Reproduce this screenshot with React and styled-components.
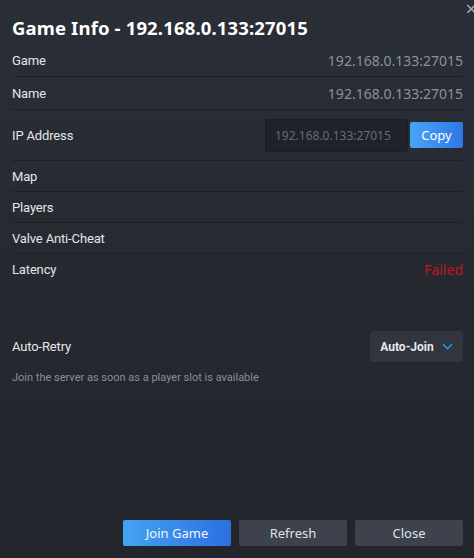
import React from 'react';
import styled, { createGlobalStyle } from 'styled-components';

const GlobalStyle = createGlobalStyle`
  html, body {
    margin: 0;
    padding: 0;
    background: #23262d;
  }
  * {
    box-sizing: border-box;
  }
`;

const rows = [
  { label: 'Game', value: '192.168.0.133:27015', tall: true },
  { label: 'Name', value: '192.168.0.133:27015', tall: true },
  { label: 'IP Address', input: '192.168.0.133:27015' },
  { label: 'Map' },
  { label: 'Players' },
  { label: 'Valve Anti-Cheat' },
  { label: 'Latency', value: 'Failed', error: true, last: true },
];

const App = () => {
  return (
    <>
      <GlobalStyle />
      <Dialog>
        <CloseGlyph>×</CloseGlyph>
        <Title>Game Info - 192.168.0.133:27015</Title>
        <InfoList>
          {rows.map(row => (
            <InfoRow
              key={row.label}
              $tall={row.tall}
              $input={!!row.input}
              $last={row.last}
            >
              <Label>{row.label}</Label>
              {row.value && <Value $error={row.error}>{row.value}</Value>}
              {row.input && (
                <InputGroup>
                  <AddressField>{row.input}</AddressField>
                  <CopyButton>Copy</CopyButton>
                </InputGroup>
              )}
            </InfoRow>
          ))}
        </InfoList>
        <RetrySection>
          <RetryRow>
            <Label>Auto-Retry</Label>
            <Dropdown>
              Auto-Join
              <svg width="11" height="7" viewBox="0 0 12 8" fill="none">
                <path d="M1 1.5 L6 6.5 L11 1.5" stroke="#1a9fff" strokeWidth="1.8" />
              </svg>
            </Dropdown>
          </RetryRow>
          <Description>Join the server as soon as a player slot is available</Description>
        </RetrySection>
        <Footer>
          <FooterButton $primary>Join Game</FooterButton>
          <FooterButton>Refresh</FooterButton>
          <FooterButton>Close</FooterButton>
        </Footer>
      </Dialog>
    </>
  );
};
export default App;

const Dialog = styled.div`
  position: relative;
  width: 474px;
  height: 558px;
  padding: 17px 11px 12px 12px;
  display: flex;
  flex-direction: column;
  overflow: hidden;
  background: linear-gradient(to bottom, #2a2e37 0%, #262930 50%, #22252b 100%);
  font-family: "Noto Sans", "Liberation Sans", sans-serif;
  color: #dcdedf;
`;

const CloseGlyph = styled.span`
  position: absolute;
  top: -1px;
  right: -3px;
  font-size: 20px;
  line-height: 20px;
  color: #a6abb2;
`;

const Title = styled.h1`
  margin: 0;
  font-size: 18.5px;
  line-height: 22px;
  font-weight: 700;
  color: #ffffff;
  letter-spacing: 0.15px;
`;

const InfoList = styled.div`
  margin-top: 5px;
  display: flex;
  flex-direction: column;
`;

const InfoRow = styled.div`
  display: flex;
  align-items: center;
  justify-content: space-between;
  height: ${props => (props.$input ? '51px' : props.$tall ? '33px' : '31px')};
  border-bottom: ${props => (props.$last ? 'none' : '1px solid #1d2026')};
`;

const Label = styled.span`
  font-family: Roboto, "Noto Sans", sans-serif;
  font-size: 13px;
  font-weight: 400;
  letter-spacing: -0.15px;
  color: #e4e6e8;
`;

const Value = styled.span`
  font-size: 14px;
  color: ${props => (props.$error ? '#c3151d' : '#8b929a')};
`;

const InputGroup = styled.div`
  display: flex;
  align-items: center;
  gap: 2px;
`;

const AddressField = styled.div`
  width: 143px;
  height: 33px;
  padding: 0 9px;
  display: flex;
  align-items: center;
  font-size: 12px;
  color: #676c74;
  background: #1f2228;
  border: 1px solid #1a1c21;
  border-radius: 2px;
`;

const CopyButton = styled.button`
  width: 53px;
  height: 26px;
  border: none;
  border-radius: 2px;
  font-family: inherit;
  font-size: 13px;
  color: #ffffff;
  background: linear-gradient(to right, #47a6f5, #2f77e6);
  cursor: pointer;
`;

const RetrySection = styled.div`
  margin-top: 46px;
  display: flex;
  flex-direction: column;
`;

const RetryRow = styled.div`
  display: flex;
  align-items: center;
  justify-content: space-between;
`;

const Dropdown = styled.div`
  width: 93px;
  height: 31px;
  display: flex;
  align-items: center;
  justify-content: center;
  gap: 8px;
  font-family: Roboto, "Noto Sans", sans-serif;
  font-size: 12px;
  font-weight: 700;
  color: #e6e8ea;
  background: #31353d;
  border-radius: 3px;
`;

const Description = styled.div`
  margin-top: 9px;
  font-family: Roboto, "Noto Sans", sans-serif;
  font-size: 11px;
  color: #8a8f97;
`;

const Footer = styled.div`
  margin-top: auto;
  display: flex;
  justify-content: flex-end;
  gap: 8px;
`;

const FooterButton = styled.button`
  width: 108px;
  height: 26px;
  border: none;
  border-radius: 2px;
  font-family: inherit;
  font-size: 13px;
  color: ${props => (props.$primary ? '#eef6ff' : '#dfe3e6')};
  background: ${props =>
    props.$primary ? 'linear-gradient(to right, #45a3f2, #2c6fdf)' : '#3d424d'};
  cursor: pointer;
`;
